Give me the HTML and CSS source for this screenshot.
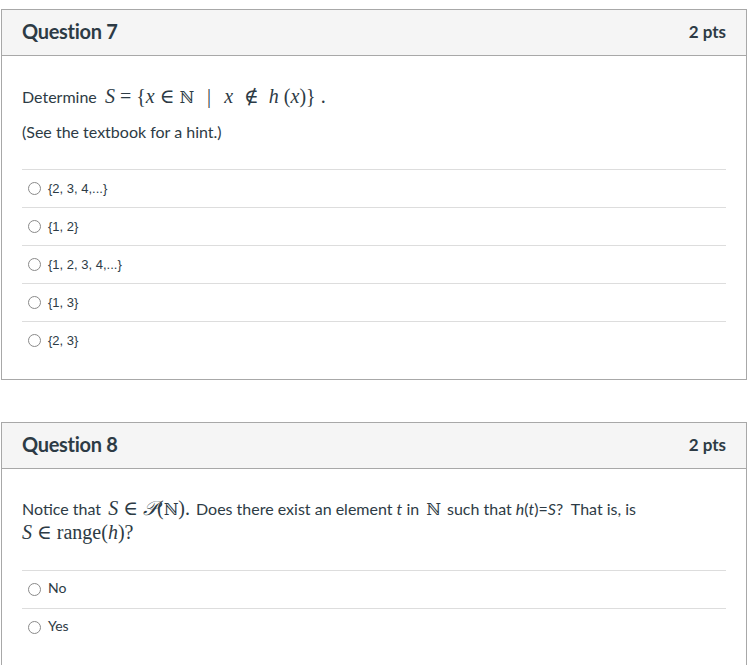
FILE: index.html
```html
<!DOCTYPE html>
<html lang="en">
<head>
<meta charset="utf-8">
<title>Quiz</title>
<link rel="stylesheet" href="styles.css">
</head>
<body>
<div class="quiz">
  <section class="question">
    <header class="q-header">
      <h2 class="q-title">Question 7</h2>
      <span class="q-points">2 pts</span>
    </header>
    <div class="q-body">
      <p class="q-text">Determine <span class="math lead"><i>S</i><span class="op">=</span>{<i>x</i><span class="op">∈</span><span class="bb">ℕ</span><span class="op wide">|</span><i>x</i><span class="op notin">∉</span><i>h</i> (<i>x</i>)}<span class="dot">.</span></span></p>
      <p class="q-text">(See the textbook for a hint.)</p>
      <ul class="answers">
        <li class="answer"><span class="radio"></span><span class="answer-label sans">{2, 3, 4,...}</span></li>
        <li class="answer"><span class="radio"></span><span class="answer-label sans">{1, 2}</span></li>
        <li class="answer"><span class="radio"></span><span class="answer-label sans">{1, 2, 3, 4,...}</span></li>
        <li class="answer"><span class="radio"></span><span class="answer-label sans">{1, 3}</span></li>
        <li class="answer"><span class="radio"></span><span class="answer-label sans">{2, 3}</span></li>
      </ul>
    </div>
  </section>

  <section class="question">
    <header class="q-header">
      <h2 class="q-title">Question 8</h2>
      <span class="q-points">2 pts</span>
    </header>
    <div class="q-body q-body-tall">
      <p class="q-text q-text-math">Notice that <span class="math"><i>S</i><span class="op">∈</span><span class="script">𝒫</span>(<span class="bb">ℕ</span>).</span> Does there exist an element <em>t</em> in <span class="math bb">ℕ</span> such that <em>h</em>(<em>t</em>)=<em>S</em>? &nbsp;That is, is<br><span class="math first"><i>S</i><span class="op">∈</span>range(<i>h</i>)?</span></p>
      <ul class="answers answers-tight">
        <li class="answer"><span class="radio"></span><span class="answer-label text">No</span></li>
        <li class="answer"><span class="radio"></span><span class="answer-label text">Yes</span></li>
      </ul>
    </div>
  </section>
</div>
</body>
</html>
```

FILE: styles.css
```css
html, body {
  margin: 0;
  padding: 0;
  background: #ffffff;
}

body {
  font-family: Lato, "Noto Sans", sans-serif;
  color: #2d3b45;
}

.quiz {
  display: flex;
  flex-direction: column;
  gap: 42px;
  padding: 9px 0 0 1px;
}

.question {
  width: 746px;
  box-sizing: border-box;
  border: 1px solid #a8a8a8;
  background: #ffffff;
}

.q-header {
  display: flex;
  justify-content: space-between;
  align-items: center;
  box-sizing: border-box;
  height: 46px;
  padding: 0 20px 4px 20px;
  background: #f5f5f5;
  border-bottom: 1px solid #a8a8a8;
}

.q-title {
  margin: 0;
  font-size: 20px;
  font-weight: 700;
  color: #2d3b45;
  letter-spacing: -0.3px;
}

.q-points {
  font-size: 17px;
  font-weight: 700;
  color: #2d3b45;
  margin-top: 2px;
}

.q-body {
  padding: 31px 20px 20px;
}

.q-body-tall {
  padding-top: 28px;
}

.q-text {
  margin: 0 0 15px;
  font-size: 16px;
  line-height: 20px;
}

.q-text-math {
  line-height: 24px;
  margin-bottom: 25px;
}

.math {
  font-family: "Liberation Serif", "DejaVu Serif", serif;
  font-size: 20px;
  line-height: 0;
  margin: 0 2px 0 3px;
}

.math.lead {
  margin-left: 4px;
}

.math.first {
  margin-left: 0;
}

.math i {
  font-style: italic;
}

.op {
  margin: 0 5px;
}

.op.wide {
  margin: 0 13px;
}

.op.notin {
  margin: 0 10px 0 11px;
}

.dot {
  margin-left: 5px;
}

.bb {
  font-family: "DejaVu Serif", serif;
  font-size: 16px;
}

.script {
  font-family: "DejaVu Serif", "DejaVu Sans", serif;
  font-style: italic;
}

.answers {
  list-style: none;
  margin: 27px 0 0;
  padding: 0;
}

.answers-tight {
  margin-top: 0;
}

.answer {
  display: flex;
  align-items: center;
  gap: 7px;
  height: 37px;
  padding-left: 6px;
  border-top: 1px solid #dddddd;
}

.radio {
  width: 11px;
  height: 11px;
  border: 1px solid #8a8a8a;
  border-radius: 50%;
  flex: none;
}

.answer-label {
  font-size: 14px;
  color: #2d3b45;
}

.answer-label.text {
  margin-bottom: 5px;
}

.answer-label.sans {
  font-family: "Liberation Sans", Arial, sans-serif;
  font-size: 13px;
}
```
